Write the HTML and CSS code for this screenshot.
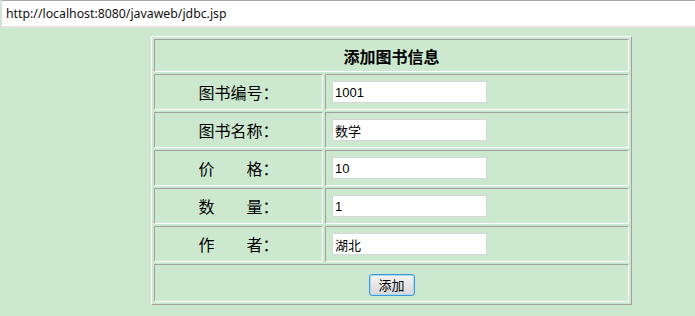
FILE: index.html
```html
<!DOCTYPE html>
<html lang="zh-CN">
<head>
<meta charset="utf-8">
<title>jdbc.jsp</title>
<link rel="stylesheet" href="styles.css">
</head>
<body>
<div class="addressbar"><span class="url">http://localhost:8080/javaweb/jdbc.jsp</span></div>
<div class="page">
  <form class="form">
    <table class="book-table">
      <colgroup>
        <col class="col-label">
        <col class="col-field">
      </colgroup>
      <tr class="row-head">
        <th colspan="2" class="title">添加图书信息</th>
      </tr>
      <tr class="row">
        <td class="label">图书编号：</td>
        <td class="field"><input class="text-input" type="text" value="1001"></td>
      </tr>
      <tr class="row">
        <td class="label">图书名称：</td>
        <td class="field"><input class="text-input" type="text" value="数学"></td>
      </tr>
      <tr class="row">
        <td class="label">价　　格：</td>
        <td class="field"><input class="text-input" type="text" value="10"></td>
      </tr>
      <tr class="row">
        <td class="label">数　　量：</td>
        <td class="field"><input class="text-input" type="text" value="1"></td>
      </tr>
      <tr class="row">
        <td class="label">作　　者：</td>
        <td class="field"><input class="text-input" type="text" value="湖北"></td>
      </tr>
      <tr class="row-btn">
        <td colspan="2" class="btn-cell"><button class="btn" type="button">添加</button></td>
      </tr>
    </table>
  </form>
</div>
</body>
</html>
```
FILE: styles.css
```css
html, body {
  margin: 0;
  padding: 0;
  height: 100%;
}
body {
  background: #cce8cf;
  font-family: "Noto Sans CJK SC", "Liberation Sans", sans-serif;
  overflow: hidden;
}
.addressbar {
  height: 25px;
  background: #ffffff;
  border-top: 1px solid #a8a8a8;
  border-bottom: 2px solid #e4e4e4;
  border-left: 1px solid #dcdcdc;
  margin-left: 1px;
  display: flex;
  align-items: center;
  padding-left: 4px;
  box-sizing: content-box;
}
.url {
  font-family: "Noto Sans", "Liberation Sans", sans-serif;
  font-size: 12.3px;
  color: #111;
}
.page {
  padding-top: 8px;
  padding-left: 151px;
}
.form {
  margin: 0;
}
.book-table {
  border-collapse: separate;
  border-spacing: 2px;
  border: 1px solid;
  border-color: #ffffff #a0a0a0 #a0a0a0 #ffffff;
  table-layout: fixed;
  width: 481px;
}
.col-label {
  width: 169px;
}
.col-field {
  width: 304px;
}
.book-table th,
.book-table td {
  border: 1px solid;
  border-color: #a0a0a0 #ffffff #ffffff #a0a0a0;
  padding: 0;
  box-sizing: border-box;
}
.title {
  height: 33px;
  font-size: 16px;
  font-weight: bold;
  text-align: center;
  color: #000;
}
.row td {
  height: 36px;
}
.label {
  text-align: center;
  font-size: 16px;
  color: #000;
  padding-top: 1px;
}
.book-table td.field {
  padding-left: 6px;
}
.text-input {
  display: block;
  width: 155px;
  height: 22px;
  box-sizing: border-box;
  border: 1px solid #d6d6d6;
  border-radius: 2px;
  background: #fff;
  padding: 0 0 0 2px;
  margin: 0;
  font-family: "Liberation Sans", "Noto Sans CJK SC", sans-serif;
  font-size: 13px;
  color: #000;
  outline: none;
}
.row-btn td {
  height: 38px;
  text-align: center;
}
.btn {
  width: 46px;
  height: 22px;
  box-sizing: border-box;
  border: 1px solid #3a9ad9;
  border-radius: 3px;
  background: linear-gradient(#f6f6f6, #e6e6e6 50%, #d8d8d8);
  box-shadow: inset 0 0 0 1px #a9d8f5;
  font-family: "Noto Sans CJK SC", sans-serif;
  font-size: 13px;
  color: #000;
  padding: 0;
  line-height: 18px;
  vertical-align: middle;
}
```
